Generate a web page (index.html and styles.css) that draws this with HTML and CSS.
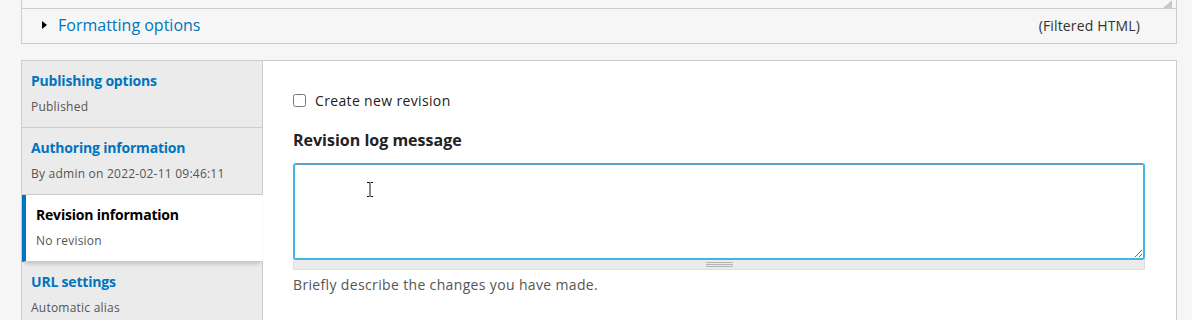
FILE: index.html
```html
<!DOCTYPE html>
<html lang="en">
<head>
    <meta charset="UTF-8">
    <title>Edit content</title>
    <link rel="stylesheet" href="styles.css">
</head>
<body>
    <div class="page">
        <div class="text-format">
            <div class="editor-tail"><span class="corner"></span></div>
            <div class="filter-row">
                <a class="filter-toggle" href="#"><span class="arrow"></span>Formatting options</a>
                <span class="filter-name">(Filtered HTML)</span>
            </div>
        </div>

        <div class="vertical-tabs">
            <ul class="tab-list">
                <li class="tab">
                    <a href="#">Publishing options</a>
                    <span class="summary">Published</span>
                </li>
                <li class="tab">
                    <a href="#">Authoring information</a>
                    <span class="summary">By admin on 2022-02-11 09:46:11</span>
                </li>
                <li class="tab selected">
                    <a href="#">Revision information</a>
                    <span class="summary">No revision</span>
                </li>
                <li class="tab">
                    <a href="#">URL settings</a>
                    <span class="summary">Automatic alias</span>
                </li>
            </ul>
            <div class="tab-pane">
                <label class="check-row">
                    <input type="checkbox">
                    <span>Create new revision</span>
                </label>
                <label class="field-label" for="log">Revision log message</label>
                <div class="textarea-wrap">
                    <textarea id="log" class="log"></textarea>
                    <svg class="ibeam" width="8" height="15" viewBox="0 0 8 15">
                        <path d="M1 0.5h2.2l0.8 0.8 0.8-0.8h2.2M4 1.3v12.4M1 14.5h2.2l0.8-0.8 0.8 0.8h2.2" fill="none" stroke="#111" stroke-width="1"/>
                    </svg>
                </div>
                <div class="grippie"><span></span></div>
                <p class="description">Briefly describe the changes you have made.</p>
            </div>
        </div>
    </div>
</body>
</html>
```

FILE: styles.css
```css
body {
    margin: 0;
    background: #f6f6f6;
    font-family: 'Open Sans', 'DejaVu Sans', sans-serif;
    color: #222;
}
.page {
    padding: 0 15px 0 21px;
}
.text-format {
    border: 1px solid #ccc;
    border-top: none;
}
.editor-tail {
    height: 8px;
    border-bottom: 1px solid #ccc;
    position: relative;
}
.corner {
    position: absolute;
    right: 4px;
    top: 0;
    width: 0;
    height: 0;
    border-left: 9px solid transparent;
    border-bottom: 8px solid #c8c8c8;
}
.filter-row {
    height: 34px;
    display: flex;
    align-items: center;
    justify-content: space-between;
    padding: 0 36px 2px 20px;
    box-sizing: border-box;
}
.filter-toggle {
    color: #0074bd;
    text-decoration: none;
    font-size: 16px;
    display: flex;
    align-items: center;
}
.arrow {
    width: 0;
    height: 0;
    border-top: 4px solid transparent;
    border-bottom: 4px solid transparent;
    border-left: 5px solid #000;
    margin-right: 11px;
}
.filter-name {
    font-size: 14px;
    letter-spacing: 0.15px;
    color: #333;
}
.vertical-tabs {
    margin-top: 16px;
    border: 1px solid #ccc;
    border-bottom: none;
    display: flex;
    background: #fff;
}
.tab-list {
    list-style: none;
    margin: 0;
    padding: 0;
    width: 240px;
    background: #ebebeb;
    border-right: 1px solid #ccc;
}
.tab {
    border-bottom: 1px solid #ccc;
    padding: 8px 9px 0 9px;
    box-sizing: border-box;
    height: 67px;
}
.tab a {
    display: block;
    color: #0074bd;
    font-weight: bold;
    font-size: 14px;
    letter-spacing: -0.2px;
    line-height: 24px;
    text-decoration: none;
}
.summary {
    display: block;
    font-size: 12px;
    letter-spacing: 0.23px;
    line-height: 28px;
    color: #555;
}
.tab.selected {
    background: #fff;
    border-left: 4px solid #0074bd;
    padding-left: 10px;
    margin-right: -1px;
    position: relative;
    box-shadow: 0 4px 5px -3px rgba(0, 0, 0, 0.25);
}
.tab.selected a {
    color: #000;
}
.tab-pane {
    flex: 1;
    padding: 29px 31px 20px 30px;
}
.check-row {
    display: flex;
    align-items: center;
    height: 20px;
    font-size: 14px;
    letter-spacing: 0.35px;
}
.check-row input {
    width: 13px;
    height: 13px;
    margin: 0 9px 0 0;
}
.field-label {
    display: block;
    margin-top: 19px;
    font-weight: bold;
    font-size: 16px;
    line-height: 22px;
}
.textarea-wrap {
    margin-top: 12px;
    position: relative;
}
.log {
    display: block;
    width: 100%;
    height: 97px;
    box-sizing: border-box;
    border: 2px solid #40b6e8;
    border-top-color: #5aa0c8;
    border-radius: 3px;
    outline: none;
    resize: vertical;
    font-family: inherit;
}
.ibeam {
    position: absolute;
    left: 73px;
    top: 19px;
}
.grippie {
    height: 9px;
    background: #ebebeb;
    border: 1px solid #ddd;
    border-top: none;
    display: flex;
    justify-content: center;
    align-items: center;
}
.grippie span {
    width: 27px;
    height: 5px;
    background: linear-gradient(#b4b4b4 1px, transparent 1px) 0 0 / 100% 2px;
}
.description {
    margin: 5px 0 0;
    font-size: 14px;
    letter-spacing: 0.35px;
    line-height: 20px;
    color: #555;
}
```
